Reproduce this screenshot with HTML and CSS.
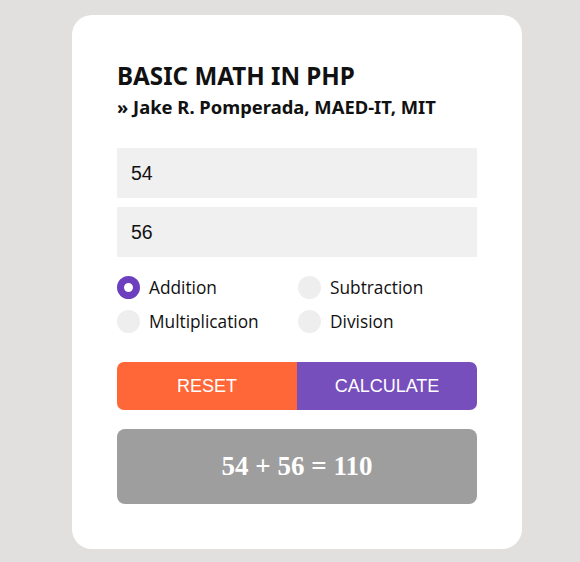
FILE: index.html
```html
<!DOCTYPE html>
<html>
<head>
<meta charset="utf-8">
<link rel="stylesheet" href="styles.css">
</head>
<body>
<div class="card">
  <h1 class="title">BASIC MATH IN PHP</h1>
  <h2 class="subtitle">» Jake R. Pomperada, MAED-IT, MIT</h2>
  <div class="field">54</div>
  <div class="field">56</div>
  <div class="options">
    <div class="option"><span class="radio checked"></span><span>Addition</span></div>
    <div class="option"><span class="radio"></span><span>Subtraction</span></div>
    <div class="option"><span class="radio"></span><span>Multiplication</span></div>
    <div class="option"><span class="radio"></span><span>Division</span></div>
  </div>
  <div class="buttons">
    <div class="btn reset">RESET</div>
    <div class="btn calc">CALCULATE</div>
  </div>
  <div class="result">54 + 56 = 110</div>
</div>
</body>
</html>
```
FILE: styles.css
```css
html, body { margin: 0; padding: 0; }
body {
  background: #e1e0df;
  height: 562px;
  overflow: hidden;
}
.card {
  margin: 15px 0 0 72px;
  width: 450px;
  height: 534px;
  box-sizing: border-box;
  background: #fff;
  border-radius: 20px;
  padding: 46px 45px 0 45px;
}
.title {
  margin: 0;
  font-family: "Noto Sans", sans-serif;
  font-weight: 700;
  font-size: 24.2px;
  line-height: 30px;
  color: #111;
}
.subtitle {
  margin: 4px 0 0 0;
  font-family: "Noto Sans", sans-serif;
  font-weight: 700;
  font-size: 18.4px;
  line-height: 24px;
  color: #111;
}
.field {
  margin-top: 10px;
  height: 50px;
  background: #f0f0f0;
  display: flex;
  align-items: center;
  padding-left: 14px;
  font-family: "Liberation Sans", Arial, sans-serif;
  font-size: 19.5px;
  color: #111;
}
.subtitle + .field { margin-top: 29px; }
.field + .field { margin-top: 9px; }
.options {
  margin-top: 19px;
  display: grid;
  grid-template-columns: 181px 179px;
  row-gap: 12px;
}
.option {
  display: flex;
  align-items: center;
  gap: 9px;
  font-family: "Open Sans", sans-serif;
  font-size: 17.3px;
  color: #111;
  height: 22px;
}
.radio {
  width: 23px;
  height: 23px;
  border-radius: 50%;
  background: #eeeeee;
  box-sizing: border-box;
  flex: none;
}
.radio.checked {
  background: #fff;
  border: 7.5px solid #6c3fbe;
}
.buttons {
  margin-top: 30px;
  display: flex;
  height: 48px;
  border-radius: 7px;
  overflow: hidden;
}
.btn {
  flex: 1;
  display: flex;
  align-items: center;
  justify-content: center;
  color: #fff;
  font-family: "Liberation Sans", Arial, sans-serif;
  font-size: 18px;
}
.reset { background: #ff6738; }
.calc { background: #774fbc; }
.result {
  margin-top: 19px;
  height: 75px;
  border-radius: 8px;
  background: #9e9e9e;
  color: #fff;
  display: flex;
  align-items: center;
  justify-content: center;
  font-family: "Liberation Serif", "Times New Roman", serif;
  font-weight: 700;
  font-size: 27px;
}
```
